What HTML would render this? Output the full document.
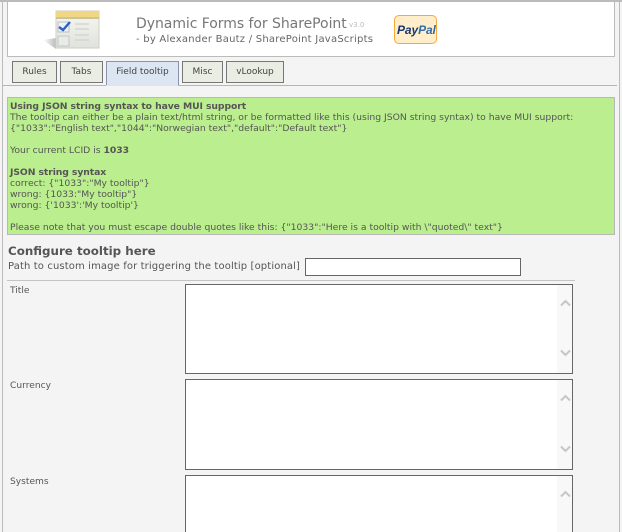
<!DOCTYPE html>
<html><head><meta charset="utf-8">
<style>
html,body{margin:0;padding:0;width:622px;height:532px;overflow:hidden;background:#f4f4f4}
body{position:relative;font-family:"DejaVu Sans","Liberation Sans",sans-serif;font-size:10px;color:#555}
.a{position:absolute;box-sizing:border-box}
.t{position:absolute;white-space:pre;line-height:11px}
.t b{letter-spacing:-.09px}
.tab{position:absolute;box-sizing:border-box;top:61px;height:22px;border:1px solid #777;background:#e9ede3;text-align:center;line-height:21px;font-size:9px;color:#444}
.ta{position:absolute;box-sizing:border-box;left:185px;width:388px;background:#fff;border:1px solid #666;overflow:hidden}
.sb{position:absolute;right:0;top:0;bottom:0;width:15px;background:#f8f8f8}
.l{font-size:9.1px;color:#555}
svg{position:absolute}
</style></head><body>
<div class="a" style="left:0;top:0;width:622px;height:2px;background:#bbb"></div>
<div class="a" style="left:2px;top:0;width:1px;height:532px;background:#bbb"></div>
<div class="a" style="left:619px;top:0;width:1px;height:532px;background:#bbb"></div>

<div class="a" style="left:7px;top:2px;width:608px;height:55px;background:#fff;border:1px solid #bbb;border-top:0"></div>

<svg style="left:40px;top:8px" width="62" height="46" viewBox="0 0 62 46">
<defs><linearGradient id="g" x1="0" y1="0" x2="0" y2="1"><stop offset="0" stop-color="#f7f7f2"/><stop offset="1" stop-color="#dfe3dc"/></linearGradient>
<linearGradient id="s" x1="0" y1="0" x2="1" y2="0"><stop offset="0" stop-color="#fff"/><stop offset="1" stop-color="#bbb"/></linearGradient></defs>
<polygon points="3,32 16,30 16,41" fill="url(#s)"/>
<rect x="16" y="3" width="43" height="37" fill="url(#g)" stroke="#cfcfc4"/>
<rect x="16" y="3" width="43" height="6" fill="#f1d684"/>
<rect x="16" y="9" width="43" height="2" fill="#c9c49a"/>
<rect x="18" y="14" width="11" height="10" fill="#eef1f5" stroke="#b8c0c8"/>
<path d="M19 19l4 3 7-8" fill="none" stroke="#2f62c0" stroke-width="2.4"/>
<path d="M35 16h14M35 21h14M35 27h14M35 32h14" stroke="#cfd2d0" stroke-width="1.2"/>
<rect x="18" y="28" width="11" height="10" fill="#e8ebe8" stroke="#c2c6c4"/>
</svg>

<div class="t" style="left:136px;top:16px;font-size:14px;line-height:17px;color:#777;letter-spacing:-.05px">Dynamic Forms for SharePoint</div>
<div class="t" style="left:349px;top:21px;font-size:7px;line-height:9px;color:#bbb">v3.0</div>
<div class="t" style="left:136px;top:34px;color:#666;letter-spacing:.24px">- by Alexander Bautz / SharePoint JavaScripts</div>

<div class="a" style="left:394px;top:15px;width:43px;height:29px;background:#ffedcb;border:1px solid #f6a93a;border-radius:5px"></div>
<div class="t" style="left:397px;top:23px;font:italic bold 12px/14px 'Liberation Sans',sans-serif;letter-spacing:-.1px;color:#16386f">Pay<span style="color:#2f6da8">Pal</span></div>

<div class="tab" style="left:12px;width:45px">Rules</div>
<div class="tab" style="left:60px;width:43px">Tabs</div>
<div class="tab" style="left:106px;width:73px;height:24px;background:#dce6f3;border-color:#8a94a8;border-bottom:0">Field tooltip</div>
<div class="tab" style="left:182px;width:41px">Misc</div>
<div class="tab" style="left:226px;width:58px">vLookup</div>
<div class="a" style="left:3px;top:85px;width:614px;height:1px;background:#b2b4c2"></div>
<div class="a" style="left:106px;top:85px;width:72px;height:1px;background:#dce6f3"></div>

<div class="a" style="left:7px;top:97px;width:608px;height:138px;background:#bbee8e;border:1px solid #b8b8b8"></div>
<div class="t" style="left:10px;top:101px;color:#555;font-size:9.25px;letter-spacing:-.01px"><b>Using JSON string syntax to have MUI support</b>
The tooltip can either be a plain text/html string, or be formatted like this (using JSON string syntax) to have MUI support:
{"1033":"English text","1044":"Norwegian text","default":"Default text"}

Your current LCID is <b>1033</b>

<b>JSON string syntax</b>
correct: {"1033":"My tooltip"}
wrong: {1033:"My tooltip"}
wrong: {'1033':'My tooltip'}

Please note that you must escape double quotes like this: {"1033":"Here is a tooltip with \"quoted\" text"}</div>

<div class="t" style="left:8px;top:244px;font-size:11.85px;line-height:15px;font-weight:bold;color:#555">Configure tooltip here</div>
<div class="t" style="left:8px;top:261px;color:#555;letter-spacing:.12px">Path to custom image for triggering the tooltip [optional]</div>
<div class="a" style="left:305px;top:258px;width:216px;height:18px;background:#fff;border:1px solid #666"></div>
<div class="a" style="left:7px;top:280px;width:568px;height:1px;background:#c4c4c4"></div>

<div class="t l" style="left:10px;top:286px">Title</div>
<div class="t l" style="left:10px;top:381px">Currency</div>
<div class="t l" style="left:10px;top:477px">Systems</div>

<div class="ta" style="top:284px;height:90px"><div class="sb"></div>
<svg style="left:372px;top:14px" width="15" height="8" viewBox="0 0 15 8"><path d="M3 6.5l4.5-4.5 4.5 4.5" fill="none" stroke="#c6c6c6" stroke-width="2"/></svg>
<svg style="left:372px;top:64px" width="15" height="8" viewBox="0 0 15 8"><path d="M3 1.5l4.5 4.5 4.5-4.5" fill="none" stroke="#c6c6c6" stroke-width="2"/></svg>
</div>
<div class="ta" style="top:379px;height:91px"><div class="sb"></div>
<svg style="left:372px;top:14px" width="15" height="8" viewBox="0 0 15 8"><path d="M3 6.5l4.5-4.5 4.5 4.5" fill="none" stroke="#c6c6c6" stroke-width="2"/></svg>
<svg style="left:372px;top:65px" width="15" height="8" viewBox="0 0 15 8"><path d="M3 1.5l4.5 4.5 4.5-4.5" fill="none" stroke="#c6c6c6" stroke-width="2"/></svg>
</div>
<div class="ta" style="top:475px;height:80px"><div class="sb"></div>
<svg style="left:372px;top:14px" width="15" height="8" viewBox="0 0 15 8"><path d="M3 6.5l4.5-4.5 4.5 4.5" fill="none" stroke="#c6c6c6" stroke-width="2"/></svg>
</div>
</body></html>
